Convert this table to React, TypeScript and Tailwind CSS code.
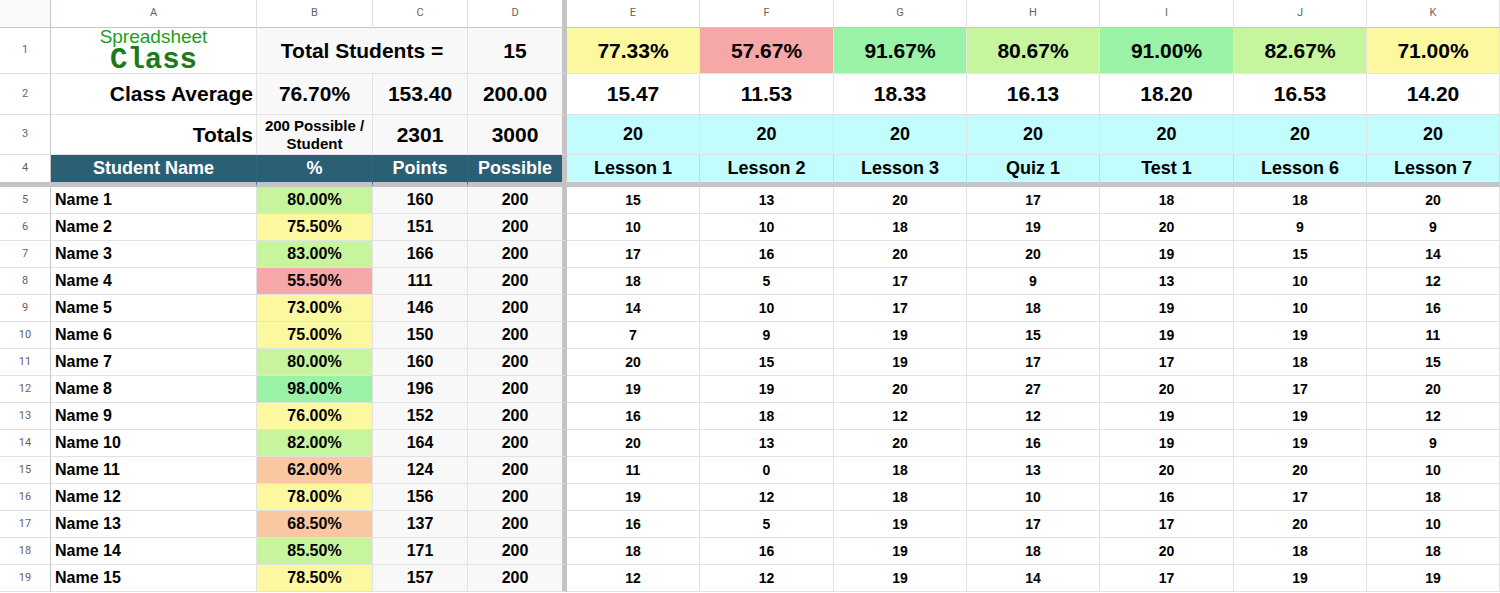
import React from 'react';

type Student = { name: string; pct: number; pts: number; scores: number[] };

const students: Student[] = [
  { name: 'Name 1', pct: 80, pts: 160, scores: [15, 13, 20, 17, 18, 18, 20] },
  { name: 'Name 2', pct: 75.5, pts: 151, scores: [10, 10, 18, 19, 20, 9, 9] },
  { name: 'Name 3', pct: 83, pts: 166, scores: [17, 16, 20, 20, 19, 15, 14] },
  { name: 'Name 4', pct: 55.5, pts: 111, scores: [18, 5, 17, 9, 13, 10, 12] },
  { name: 'Name 5', pct: 73, pts: 146, scores: [14, 10, 17, 18, 19, 10, 16] },
  { name: 'Name 6', pct: 75, pts: 150, scores: [7, 9, 19, 15, 19, 19, 11] },
  { name: 'Name 7', pct: 80, pts: 160, scores: [20, 15, 19, 17, 17, 18, 15] },
  { name: 'Name 8', pct: 98, pts: 196, scores: [19, 19, 20, 27, 20, 17, 20] },
  { name: 'Name 9', pct: 76, pts: 152, scores: [16, 18, 12, 12, 19, 19, 12] },
  { name: 'Name 10', pct: 82, pts: 164, scores: [20, 13, 20, 16, 19, 19, 9] },
  { name: 'Name 11', pct: 62, pts: 124, scores: [11, 0, 18, 13, 20, 20, 10] },
  { name: 'Name 12', pct: 78, pts: 156, scores: [19, 12, 18, 10, 16, 17, 18] },
  { name: 'Name 13', pct: 68.5, pts: 137, scores: [16, 5, 19, 17, 17, 20, 10] },
  { name: 'Name 14', pct: 85.5, pts: 171, scores: [18, 16, 19, 18, 20, 18, 18] },
  { name: 'Name 15', pct: 78.5, pts: 157, scores: [12, 12, 19, 14, 17, 19, 19] },
];

const lessons = [
  { avgPct: 77.33, avg: '15.47', label: 'Lesson 1' },
  { avgPct: 57.67, avg: '11.53', label: 'Lesson 2' },
  { avgPct: 91.67, avg: '18.33', label: 'Lesson 3' },
  { avgPct: 80.67, avg: '16.13', label: 'Quiz 1' },
  { avgPct: 91.0, avg: '18.20', label: 'Test 1' },
  { avgPct: 82.67, avg: '16.53', label: 'Lesson 6' },
  { avgPct: 71.0, avg: '14.20', label: 'Lesson 7' },
];

const letters = ['A', 'B', 'C', 'D', 'E', 'F', 'G', 'H', 'I', 'J', 'K'];

// conditional formatting bands
const gradeBg = (p: number) => {
  if (p < 60) return 'bg-[#f6a8a8]';
  if (p < 70) return 'bg-[#f9c7a2]';
  if (p < 80) return 'bg-[#fcf8a0]';
  if (p < 90) return 'bg-[#c6f59d]';
  return 'bg-[#9af2a7]';
};

const cell = 'flex items-center justify-center border-r border-b border-[#e2e2e2]';
const frozenCol = 'border-r-[5px] border-r-[#c4c4c4]';
const rowNum = 'flex items-center justify-center border-r border-b border-[#e2e2e2] border-r-[#c4c7c5] text-[11px] text-[#5f6368] font-["Roboto",sans-serif] font-normal';
const headDark = 'h-[32px] flex items-center justify-center bg-[#2a5f74] text-white text-[18px] border-r border-[#2f6579] border-b-[5px] border-b-[#c4c4c4]';

export default function App() {
  return (
    <div className="w-[1500px] h-[593px] overflow-hidden bg-white text-black font-['Liberation_Sans',Arial,sans-serif] font-bold">
      <div className="grid grid-cols-[51px_206px_116px_95px_99px_133px_134px_133px_133px_134px_133px_133px]">
        {/* column letters */}
        <div className="h-[28px] bg-[#f8f9fa] border-r border-b border-[#c4c7c5]" />
        {letters.map((l, i) => (
          <div
            key={l}
            className={`h-[28px] flex items-center justify-center border-r border-b border-[#e2e2e2] border-b-[#c4c7c5] text-[11px] text-[#5f6368] font-['Roboto',sans-serif] font-normal ${i === 3 ? frozenCol : ''}`}
          >
            {l}
          </div>
        ))}

        {/* row 1 */}
        <div className={`${rowNum} h-[46px]`}>1</div>
        <div className="h-[46px] flex flex-col items-center justify-start border-r border-b border-[#e2e2e2] overflow-visible">
          <div className="h-[19px] text-[19px] leading-[18px] font-normal text-[#1aa01a]">Spreadsheet</div>
          <div className="h-[26px] text-[29px] leading-[28px] font-['Liberation_Mono',monospace] font-bold text-[#1c7a1c]">Class</div>
        </div>
        <div className={`${cell} col-span-2 h-[46px] bg-[#f8f8f8] text-[21px]`}>Total Students =</div>
        <div className={`${cell} ${frozenCol} h-[46px] bg-[#f8f8f8] text-[21px]`}>15</div>
        {lessons.map((l) => (
          <div key={l.label} className={`${cell} h-[46px] text-[21px] border-[#e6e6e6] ${gradeBg(l.avgPct)}`}>
            {l.avgPct.toFixed(2)}%
          </div>
        ))}

        {/* row 2 */}
        <div className={`${rowNum} h-[41px]`}>2</div>
        <div className={`${cell} h-[41px] justify-end pr-[3px] text-[21px]`}>Class Average</div>
        <div className={`${cell} h-[41px] bg-[#f8f8f8] text-[21px]`}>76.70%</div>
        <div className={`${cell} h-[41px] bg-[#f8f8f8] text-[21px]`}>153.40</div>
        <div className={`${cell} ${frozenCol} h-[41px] bg-[#f8f8f8] text-[21px]`}>200.00</div>
        {lessons.map((l) => (
          <div key={l.label} className={`${cell} h-[41px] text-[21px]`}>
            {l.avg}
          </div>
        ))}

        {/* row 3 */}
        <div className={`${rowNum} h-[40px]`}>3</div>
        <div className={`${cell} h-[40px] justify-end pr-[3px] text-[21px]`}>Totals</div>
        <div className={`${cell} h-[40px] bg-[#f8f8f8] flex-col text-[15px] leading-[18px] text-center`}>
          <span>200 Possible /</span>
          <span>Student</span>
        </div>
        <div className={`${cell} h-[40px] bg-[#f8f8f8] text-[21px]`}>2301</div>
        <div className={`${cell} ${frozenCol} h-[40px] bg-[#f8f8f8] text-[21px]`}>3000</div>
        {lessons.map((l) => (
          <div key={l.label} className={`${cell} h-[40px] bg-[#c2fcfc] border-[#b2e4e4] text-[18px]`}>
            20
          </div>
        ))}

        {/* row 4 - headers, frozen */}
        <div className={`${rowNum} h-[32px] border-b-[5px] border-b-[#c4c4c4]`}>4</div>
        <div className={headDark}>Student Name</div>
        <div className={headDark}>%</div>
        <div className={headDark}>Points</div>
        <div className={`${headDark} border-r-[5px] border-r-[#c4c4c4]`}>Possible</div>
        {lessons.map((l) => (
          <div key={l.label} className="h-[32px] flex items-center justify-center bg-[#c2fcfc] text-[18px] border-r border-[#b2e4e4] border-b-[5px] border-b-[#c4c4c4]">
            {l.label}
          </div>
        ))}

        {/* student rows */}
        {students.map((s, i) => (
          <React.Fragment key={s.name}>
            <div className={`${rowNum} h-[27px]`}>{i + 5}</div>
            <div className={`${cell} h-[27px] justify-start pl-[4px] text-[16px]`}>{s.name}</div>
            <div className={`${cell} h-[27px] text-[16px] ${gradeBg(s.pct)}`}>{s.pct.toFixed(2)}%</div>
            <div className={`${cell} h-[27px] bg-[#f8f8f8] text-[16px]`}>{s.pts}</div>
            <div className={`${cell} ${frozenCol} h-[27px] bg-[#f8f8f8] text-[16px]`}>200</div>
            {s.scores.map((sc, j) => (
              <div key={j} className={`${cell} h-[27px] text-[14px]`}>
                {sc}
              </div>
            ))}
          </React.Fragment>
        ))}
      </div>
    </div>
  );
}
